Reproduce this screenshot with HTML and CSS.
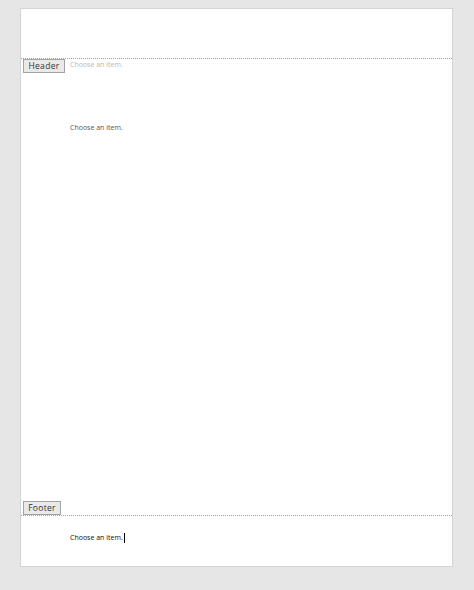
FILE: index.html
```html
<!DOCTYPE html>
<html>
<head>
<meta charset="utf-8">
<link rel="stylesheet" href="styles.css">
</head>
<body>
<div class="page">
  <div class="header-space"></div>
  <div class="header-row">
    <span class="tab tab-header">Header</span>
    <span class="placeholder">Choose an item.</span>
  </div>
  <div class="body-text">Choose an item.</div>
  <div class="spacer"></div>
  <div class="footer-tab-row">
    <span class="tab tab-footer">Footer</span>
  </div>
  <div class="footer-line"></div>
  <div class="footer-text">Choose an item.<span class="cursor"></span></div>
</div>
</body>
</html>
```
FILE: styles.css
```css
html, body {
  margin: 0;
  padding: 0;
}
body {
  background: #e6e6e6;
  padding: 8px 21px 23px 20px;
  height: 590px;
  box-sizing: border-box;
  font-family: "Open Sans", "Liberation Sans", sans-serif;
}
.page {
  height: 559px;
  box-sizing: border-box;
  background: #fff;
  border: 1px solid #d4d4d4;
  display: flex;
  flex-direction: column;
}
.header-space {
  height: 49px;
  flex: none;
  border-bottom: 1px dotted #a0a0a0;
}
.header-row {
  display: flex;
  align-items: flex-start;
  padding-left: 2px;
  gap: 5px;
}
.tab {
  box-sizing: border-box;
  height: 14px;
  background: #e9e9e9;
  border: 1px solid #a3a3a3;
  font-size: 8.5px;
  line-height: 12px;
  color: #333;
  display: flex;
  justify-content: center;
  letter-spacing: 0.3px;
}
.tab-header {
  width: 42px;
}
.tab-footer {
  width: 38px;
}
.placeholder {
  font-size: 7px;
  line-height: 10px;
  color: #b9b9b9;
  margin-top: 1px;
}
.body-text {
  margin-top: 50px;
  padding-left: 49px;
  font-size: 7px;
  line-height: 10px;
  color: #555;
}
.spacer {
  flex: 1;
}
.footer-tab-row {
  padding-left: 2px;
  display: flex;
}
.footer-line {
  border-top: 1px dotted #a0a0a0;
}
.footer-text {
  margin-top: 17px;
  margin-bottom: 23px;
  padding-left: 49px;
  font-size: 7px;
  line-height: 10px;
  color: #111;
  display: flex;
  align-items: center;
}
.cursor {
  display: inline-block;
  width: 1px;
  height: 10px;
  background: #000;
  margin-left: 1px;
}
```
